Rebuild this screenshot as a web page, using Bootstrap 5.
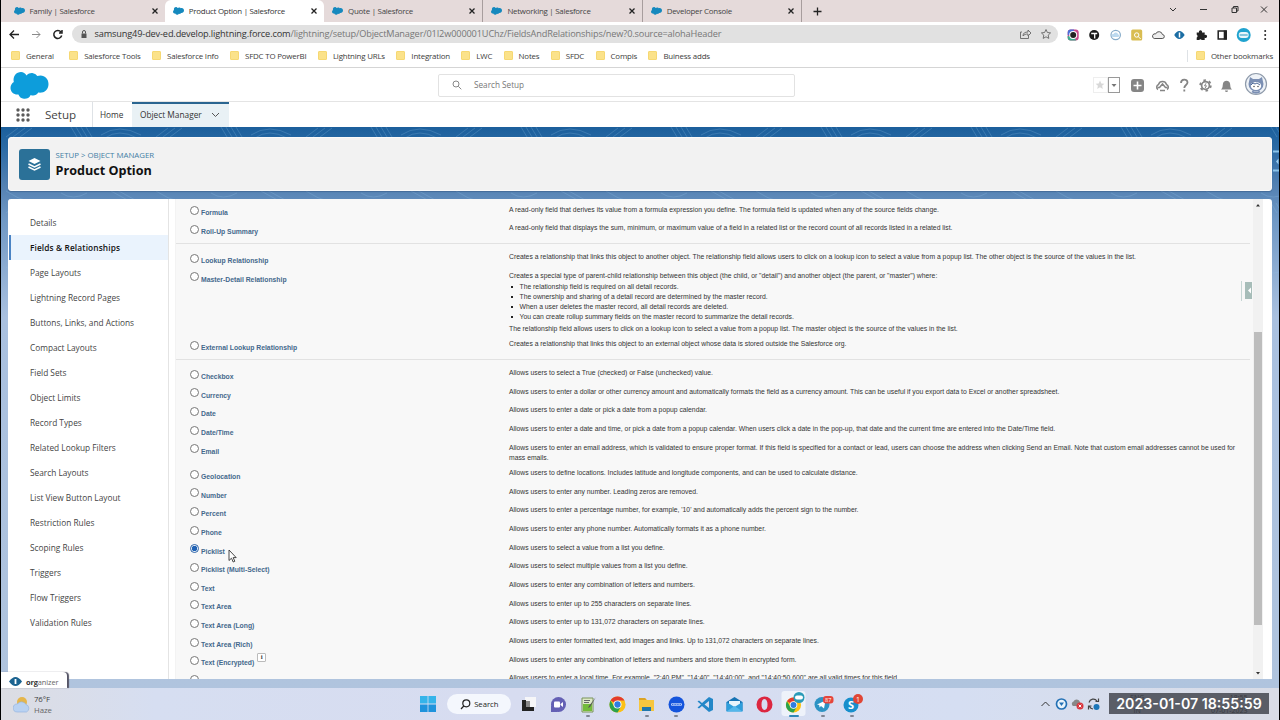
<!DOCTYPE html>
<html lang="en">
<head>
<meta charset="utf-8">
<title>Product Option | Salesforce</title>
<link href="https://cdn.jsdelivr.net/npm/bootstrap@5.3.0/dist/css/bootstrap.min.css" rel="stylesheet">
<style>
html,body{height:720px;overflow:hidden}
body{width:1280px;background:#fff;font-family:"Open Sans","Noto Sans",sans-serif;font-size:8.3px;line-height:12px;color:#3c3c3c;border-left:1px solid #000;border-right:1px solid #000;position:relative;white-space:nowrap}
svg{display:block;flex:none}
/* browser */
.tabstrip{height:22px;background:#e5dada;padding-left:4.5px}
.tab{width:159.3px;height:22px;padding:0 6px 0 8px;font-size:7.9px;letter-spacing:-.24px;color:#444}
.tab.on{background:#fff;border-radius:6px 6px 0 0;color:#333}
.tab.sep{border-right:1px solid #a79d9d}
.tab svg.fav{margin-right:5px}
.plus{margin:7px 0 0 11px}
.winbtns{margin-right:1.5px}
.toolbar{height:23px;padding-top:1px}
.url{width:987px;height:18px;border-radius:9px;background:#e1e1e1;font-size:9.2px;letter-spacing:-.146px;color:#777;padding:0 6px 0 8px;gap:6.5px}
.url b{font-weight:400;color:#333}
.marks{height:23px;padding:0 6px 1px 10px;border-bottom:1px solid #d5d5d5;gap:11.4px;font-size:7.9px;letter-spacing:-.18px}
.marks .bm{display:flex;align-items:center;gap:6px}
.folder{width:9px;height:9px;background:#fbe28a;border:1px solid #f6d873;border-radius:1px}
/* salesforce header */
.gh{height:34px;border-bottom:1px solid #e4e4e4;padding:1px 1px 0 9px}
.search{width:357px;height:23px;border:1px solid #e2e2e2;border-radius:2px;font-size:8.2px;color:#777;padding-left:13px;gap:12px;margin-left:389px}
.ctx{height:25px;padding-left:14px;color:#333}
.ctx .app{font-size:11.6px;color:#444;margin-left:14px;width:47px}
.otab{width:97px;height:25px;border-top:2px solid #2a6590;background:#e9f1f5;padding:0 9px 1px 8px}
.stage{height:561px;padding:10px 7px 0 7px;position:relative;background:linear-gradient(#1b5f9c 0,#2a6aa5 20px,#5683b4 62px,#6e97c4 90px,#a9c0df 190px,#b0c4de 100%)}
.topo{position:absolute;left:0;top:0}
.phead{height:54px;background:#f2f2f2;border:1px solid #fafafa;border-radius:3px;padding-left:10px;box-shadow:0 1px 1px rgba(30,60,100,.35);position:relative}
.obj{width:31px;height:31px;border-radius:3px;background:#2b7198;margin-right:5.5px}
.crumb{font-size:7.85px;color:#4380a5;line-height:11px}
.ttl{font-size:12.6px;font-weight:700;color:#111;line-height:15px;margin-top:2px}
.bodyc{height:480px;background:#fff;margin-top:8px;border-radius:3px 3px 0 0;overflow:hidden;position:relative;border-left:1px solid #fff}
.side{width:160px;padding-top:11px;border-right:1px solid #e4e4e4;color:#444}
.side div{height:25px;line-height:25px;padding-left:21px}
.side div.on{background:#eaf3fd;border-left:2px solid #4a83c4;padding-left:19px;font-weight:600;letter-spacing:.12px;color:#111}
.gut{width:7px;background:#fff;border-right:1px solid #f3f3f3}
.frame{width:1077px;background:#f8f8f8;padding-top:1.2px;font-family:"Liberation Sans",Arial,sans-serif;font-size:6.81px;line-height:10px;color:#333}
.r{height:18.667px;display:flex;padding-left:14px}
.r .lb{width:319px;display:flex;font-weight:700;color:#44688c;padding-top:8.3px;font-size:6.82px}
.r .ds{padding-top:4.4px}
.r.master{height:68.4px}
.r.tall{height:25.4px}
.rad{width:9px;height:9px;border:1px solid #777;border-radius:50%;background:#fff;margin:-2.2px 2px 0 0;flex:none}
.rad.on{border-color:#2a62a8;background:radial-gradient(circle,#1f62b5 2.4px,#fff 3.1px)}
.ln{height:10.2px;padding-top:5.2px}
.ln i{display:block;height:1px;background:#e2e2e2;width:1074px}
.ds ul{list-style:none;margin:1.3px 0 1.6px;padding-left:10.5px}
.ds li{position:relative}
.ds li:before{content:"";position:absolute;left:-9px;top:4px;width:2px;height:2px;background:#222}
.info{width:9px;height:9px;border:1px solid #bbb;border-radius:1px;margin:-5px 0 0 3px;font:700 7px/7px "Liberation Serif",serif;text-align:center;color:#444;background:#fff}
.sb{width:10px;background:#f1f1f1;position:relative}
.sb .th{width:8px;height:293px;background:#bdbdbd;margin:133px 1px 0}
.peek{position:absolute;left:1232px;top:81.5px;width:11px;height:20px;border-left:1px solid #c6d6d4;padding:1px 0 0 3px}
.edge{position:absolute;right:0;top:23px}
.org{position:absolute;left:0;top:672px;width:66px;height:16px;background:#fff;border-radius:0 4px 0 0;box-shadow:1.5px 0 1px #556;font-size:7.4px;letter-spacing:-.1px;color:#666;padding:3px 0 0 8px;gap:4px}
.org b{color:#333}
/* taskbar */
.task{height:32px;background:linear-gradient(90deg,#dcdde3,#d6def1 12%,#d7dcf0 40%,#d5def2 75%,#d9dce6);position:relative}
.wico{position:absolute;left:12px;top:8px}
.wtxt{position:absolute;left:33px;top:6px;line-height:10.5px;font-size:7.8px;letter-spacing:-.1px}
.wtxt span{color:#666}
.apps{position:absolute;left:412px;top:0;height:32px}
.cell{width:29.33px;height:32px;display:flex;justify-content:center;align-items:center;position:relative}
.cell.tv{width:26px;margin-right:2px}
.pill{width:64px;height:20px;border-radius:10px;background:#f4f7fd;font-size:7.7px;color:#222;gap:3px;margin:0 5px}
.dot:after{content:"";position:absolute;bottom:3px;width:4px;height:1.6px;border-radius:1px;background:#808694}
.dot.w:after{width:10px;background:#2f86b8}
.tray{position:absolute;left:1039px;top:0;height:32px}
.stamp{position:absolute;left:1108px;top:5px;width:160px;height:21px;background:rgba(62,65,73,.82);color:#fff;font:600 14.2px/22px Inter,sans-serif;text-align:center}
.under{position:absolute;font-size:7px;color:#111;top:3px;line-height:13px}
.cur{position:absolute;left:227px;top:549px}
</style>
</head>
<body>
<svg width="0" height="0" class="position-absolute">
<symbol id="cloud" viewBox="0 0 38 27"><path d="M16 3.500C18 1.300 20.500.8 22.500 1.200c2 .4 3.500 1.600 4.300 2.800C33 2 38 6 38 12c0 6-5 9.500-10.200 8.600-1.600 2.800-4.900 3.700-7.600 2.500-1.300 3-4 3.900-6.700 3.700-3-.3-4.700-2-5.600-4.300C3.500 23 0 20 0 16c0-2.600 1.400-4.700 3.300-5.900C2 4 6 0 10.500 0c2.300 0 4.300 1.300 5.500 3.500z"/></symbol>
<symbol id="x" viewBox="0 0 8 8"><path d="M1.500 1.500l5 5M6.500 1.500l-5 5" stroke="#222" stroke-width="1.300" fill="none"/></symbol>
<symbol id="chrome" viewBox="0 0 20 20"><circle cx="10" cy="10" r="9.500" fill="#fbc116"/><path d="M10 10L1.800 5.300A9.500 9.500 0 0 1 18.200 5.300H10z" fill="#e33b2e"/><path d="M1.800 5.300A9.500 9.500 0 0 0 10 19.500L14 12.500 6 12.300z" fill="#2ba24c"/><circle cx="10" cy="10" r="4.700" fill="#fff"/><circle cx="10" cy="10" r="3.700" fill="#2f7de1"/></symbol>
</svg>

<div class="tabstrip d-flex">
 <div class="tab d-flex align-items-center"><svg class="fav" width="11" height="8" fill="#1589be"><use href="#cloud"/></svg><span>Family | Salesforce</span><svg class="ms-auto" width="8" height="8"><use href="#x"/></svg></div>
 <div class="tab on d-flex align-items-center"><svg class="fav" width="11" height="8" fill="#1589be"><use href="#cloud"/></svg><span>Product Option | Salesforce</span><svg class="ms-auto" width="8" height="8"><use href="#x"/></svg></div>
 <div class="tab sep d-flex align-items-center"><svg class="fav" width="11" height="8" fill="#1589be"><use href="#cloud"/></svg><span>Quote | Salesforce</span><svg class="ms-auto" width="8" height="8"><use href="#x"/></svg></div>
 <div class="tab sep d-flex align-items-center"><svg class="fav" width="11" height="8" fill="#1589be"><use href="#cloud"/></svg><span>Networking | Salesforce</span><svg class="ms-auto" width="8" height="8"><use href="#x"/></svg></div>
 <div class="tab sep d-flex align-items-center"><svg class="fav" width="11" height="8" fill="#1589be"><use href="#cloud"/></svg><span>Developer Console</span><svg class="ms-auto" width="8" height="8"><use href="#x"/></svg></div>
 <svg class="plus" width="9" height="9" stroke="#222" stroke-width="1.300"><path d="M4.500 .5v8M.5 4.500h8"/></svg>
 <svg class="ms-auto winbtns" width="112" height="22" fill="none" stroke="#333"><path d="M4 8l3 3 3-3M34 9.500h7M66 8h4.500v4.500H66zM67.500 8V6.500H72V11h-1.500M95 6.500l6 6M101 6.500l-6 6"/></svg>
</div>
<div class="toolbar d-flex align-items-center">
 <svg width="71" height="23" fill="none" stroke="#222" stroke-width="1.300"><path d="M18 11.500H9.500M13 7.500l-4 4 4 4"/><path stroke="#8a8a8a" stroke-width="1" d="M31 11.500h8M35.500 8l3.500 3.500-3.500 3.500"/><path stroke-width="1.500" d="M60 9a4 4 0 1 0 .7 3.500M61 7v3h-3"/></svg>
 <div class="url d-flex align-items-center"><svg width="8" height="10"><path d="M1.500 4.500h5v4.500h-5z" fill="#555"/><path d="M2.500 4.500V3a1.500 1.500 0 0 1 3 0v1.500" fill="none" stroke="#555"/></svg><span><b>samsung49-dev-ed.develop.lightning.force.com</b>/lightning/setup/ObjectManager/01I2w000001UChz/FieldsAndRelationships/new?0.source=alohaHeader</span>
 <svg class="ms-auto" width="34" height="12" fill="none" stroke="#666" stroke-width=".9"><path d="M4 4H2.500v6.500h8V8M5 8c0-3 2-4 5-4V2l3 3-3 3V6C8 6 6 6.500 5 8z"/><path d="M28 1.500l1.400 3 3.200.4-2.400 2.200.6 3.300L28 8.800l-2.800 1.600.6-3.300-2.400-2.200 3.200-.4z"/></svg></div>
 <svg width="221" height="23">
  <g transform="translate(.7 -.5)">
  <g transform="translate(14.500 12.500)"><rect x="-5.500" y="-5.500" width="11" height="11" rx="3" fill="#c94a8c"/><path d="M-5.500 0v-2.500a3 3 0 0 1 3-3H1L-1 0z" fill="#4d6fd8"/><path d="M-5.500 1v1.500a3 3 0 0 0 3 3H3L0 1z" fill="#3fae8e"/><circle r="4" fill="#fff"/><circle r="3" fill="#222"/></g>
  <g transform="translate(35.500 12.500)"><circle r="5" fill="#1b1b1b"/><path d="M-3-1.500h6M.5-1.500v5" stroke="#fff" stroke-width="1.300"/></g>
  <g transform="translate(57 12.500)"><circle r="4.700" fill="#fff" stroke="#86abc9" stroke-width="1.200"/><path d="M-2.800 2a1.500 1.500 0 0 1 .5-3 2.500 2.500 0 0 1 4.700.3A1.400 1.400 0 0 1 2.500 2z" fill="#bcd9ef"/></g>
  <g transform="translate(78 12.500)"><rect x="-5.500" y="-5.500" width="11" height="11" rx="1.500" fill="#d9bd52"/><circle r="2.200" fill="none" stroke="#fff"/><path d="M1.500 1.500l2.500 2.500" stroke="#fff"/></g>
  <path d="M95.500 16h8a2 2 0 0 0 .2-4 3.500 3.500 0 0 0-6.700-.6 2.400 2.400 0 0 0-1.500 4.600z" fill="#eee" stroke="#555"/>
  <path d="M115.500 12.500q5-8 10.500 0-5.500 8-10.500 0z" fill="#1c6ea4"/><circle cx="120.800" cy="12.500" r="3.500" fill="#1c6ea4"/><path d="M120.800 10v5" stroke="#fff" stroke-width="1.500"/>
  <path d="M138 10h2.300a1.600 1.600 0 1 1 3 0h2.700v2.500a1.600 1.600 0 1 1 0 2.800V17.500h-3a1.500 1.500 0 0 0-2.500 0H138v-2.500a1.500 1.500 0 0 0 0-2.700z" fill="#222"/>
  <path d="M159.500 8.500h8v8h-8z" fill="none" stroke="#222" stroke-width="1.500"/><path d="M165 8h3v9h-3z" fill="#222"/>
  <circle cx="185" cy="12.500" r="7" fill="#20a3cf"/><rect x="180" y="9.500" width="10" height="6" rx="3" fill="#e9f6fb"/><path d="M181 12.500h8" stroke="#2898c0"/>
  <g fill="#222"><circle cx="206.500" cy="8.500" r="1"/><circle cx="206.500" cy="12.500" r="1"/><circle cx="206.500" cy="16.500" r="1"/></g>
  </g>
 </svg>
</div>
<div class="marks d-flex align-items-center">
 <div class="bm me-1"><i class="folder"></i><span>General</span></div>
 <div class="bm"><i class="folder"></i><span>Salesforce Tools</span></div>
 <div class="bm"><i class="folder"></i><span>Salesforce Info</span></div>
 <div class="bm"><i class="folder"></i><span>SFDC TO PowerBI</span></div>
 <div class="bm"><i class="folder"></i><span>Lightning URLs</span></div>
 <div class="bm"><i class="folder"></i><span>Integration</span></div>
 <div class="bm"><i class="folder"></i><span>LWC</span></div>
 <div class="bm"><i class="folder"></i><span>Notes</span></div>
 <div class="bm"><i class="folder"></i><span>SFDC</span></div>
 <div class="bm"><i class="folder"></i><span>Compis</span></div>
 <div class="bm"><i class="folder"></i><span>Buiness adds</span></div>
 <div class="bm ms-auto border-start ps-2"><i class="folder"></i><span>Other bookmarks</span></div>
</div>

<div class="gh d-flex align-items-center">
 <svg width="39" height="27" fill="#0d9ddb"><use href="#cloud"/></svg>
 <div class="search d-flex align-items-center"><svg width="10" height="10" fill="none" stroke="#888"><circle cx="4" cy="4" r="3"/><path d="M6.300 6.300L9.300 9.300"/></svg><span>Search Setup</span></div>
 <svg class="ms-auto" width="188" height="32" viewBox="0 0 188 32">
  <rect x="3.500" y="8.500" width="14" height="15" fill="#fff" stroke="#eee"/><path d="M10 11.500l1.300 2.900 3.100.3-2.300 2.100.7 3.100L10 18.300l-2.800 1.600.7-3.100-2.300-2.100 3.100-.3z" fill="#d8d8d8"/>
  <rect x="18.500" y="8.500" width="11" height="15" fill="#fff" stroke="#999"/><path d="M21.500 15h5l-2.500 3z" fill="#777"/>
  <rect x="41" y="10" width="13" height="13" rx="3" fill="#858585"/><path d="M47.500 12.500v8M43.500 16.500h8" stroke="#fff" stroke-width="1.600"/>
  <g transform="translate(72.500 16.500)" fill="none" stroke="#858585" stroke-width="1.500"><path d="M-4.500 4A2.800 2.800 0 0 1-4-1 4.200 4.200 0 0 1 4-1 2.800 2.800 0 0 1 4.500 4"/><path d="M-3 2l3-3.500L3 2M-2.500 5h5M-5 2h2.500M2.500 2H5"/></g>
  <path d="M91 14c0-4.500 6.500-4.500 6.500-.5 0 2.500-3.200 2.500-3.200 5.500M94.300 20.500v2" fill="none" stroke="#858585" stroke-width="1.800"/>
  <g transform="translate(115.500 16.500)" fill="none" stroke="#858585"><circle r="3.900" stroke-width="1.700"/><circle r="5.300" stroke-width="1.800" stroke-dasharray="2.500 3.050"/><path d="M.6-2.300L-1 .3H1L-.4 2.500" stroke-width="1"/></g>
  <path d="M131 20.500c2-1.500 1.500-4 2-6a3.600 3.600 0 0 1 7 0c.5 2 0 4.500 2 6zM135 21.500h3a1.500 1.500 0 0 1-3 0z" fill="#858585"/>
  <g transform="translate(166 15)"><circle r="10.500" fill="#eef2f7" stroke="#8f9bab" stroke-width="1.200"/><path d="M-6-7l3 2h6l3-2 1.500 7a7.500 7.500 0 0 1-15 0z" fill="#7b8fb3"/><ellipse cy="2" rx="5.200" ry="4" fill="#fff"/><path d="M-5 1l2-2 2 1 2-1 3 2" stroke="#506b98" fill="none"/><circle cx="-2" cy="2.500" r=".7" fill="#333"/><circle cx="2" cy="2.500" r=".7" fill="#333"/><path d="M-4 7.500q4 2.500 8 0" stroke="#7b8fb3" stroke-width="2" fill="none"/></g>
 </svg>
</div>
<div class="ctx d-flex align-items-center">
 <svg width="16" height="16" fill="#5a5a5a"><g id="d"><circle cx="3" cy="3" r="1.700"/><circle cx="8" cy="3" r="1.700"/><circle cx="13" cy="3" r="1.700"/></g><use href="#d" y="5"/><use href="#d" y="10"/></svg>
 <span class="app">Setup</span>
 <span class="border-start h-100 d-flex align-items-center" style="width:40px;padding-left:7px">Home</span>
 <div class="otab d-flex align-items-center justify-content-between"><span>Object Manager</span><svg width="9" height="6" fill="none" stroke="#555"><path d="M1 1l3.500 3.500L8 1"/></svg></div>
</div>

<div class="stage">
 <svg class="topo" width="1278" height="150"><defs><pattern id="tp" width="150" height="76" patternUnits="userSpaceOnUse"><g fill="none" stroke="#8fc0e6" stroke-opacity=".35" stroke-width=".7"><path d="M5 10l12-9M12 10l12-9M19 10l12-9M70 0l6 10M75 0l6 10M80 0l6 10M85 0l6 10M100 8q18-12 40 0M104 11q14-10 32 0M5 64q12 8 22 10M60 66q12 8 26 0M110 64l20 11M116 63l20 11"/></g></pattern></defs><rect width="1278" height="150" fill="url(#tp)"/></svg>
 <svg class="edge" width="6" height="22"><path d="M0 1.500h6M0 20.500h6" stroke="#8cc4ea" stroke-width="2"/><path d="M5.500 8.500v6L3 11.500z" fill="#9ccdf0"/></svg>
 <div class="phead d-flex align-items-center">
  <div class="obj d-flex align-items-center justify-content-center"><svg width="15" height="15"><path d="M7.500 1l6 3-6 3-6-3z" fill="#fff"/><path d="M1.500 7l6 3 6-3M1.500 10l6 3 6-3" fill="none" stroke="#fff" stroke-width="1.500"/></svg></div>
  <div><div class="crumb">SETUP &gt; OBJECT MANAGER</div><div class="ttl">Product Option</div></div>
 </div>
 <div class="bodyc d-flex">
  <div class="side">
   <div>Details</div><div class="on">Fields &amp; Relationships</div><div>Page Layouts</div><div>Lightning Record Pages</div><div>Buttons, Links, and Actions</div><div>Compact Layouts</div><div>Field Sets</div><div>Object Limits</div><div>Record Types</div><div>Related Lookup Filters</div><div>Search Layouts</div><div>List View Button Layout</div><div>Restriction Rules</div><div>Scoping Rules</div><div>Triggers</div><div>Flow Triggers</div><div>Validation Rules</div>
  </div>
  <div class="gut"></div>
  <div class="frame">
   <div class="r"><div class="lb"><i class="rad"></i>Formula</div><div class="ds">A read-only field that derives its value from a formula expression you define. The formula field is updated when any of the source fields change.</div></div>
   <div class="r"><div class="lb"><i class="rad"></i>Roll-Up Summary</div><div class="ds">A read-only field that displays the sum, minimum, or maximum value of a field in a related list or the record count of all records listed in a related list.</div></div>
   <div class="ln"><i></i></div>
   <div class="r"><div class="lb"><i class="rad"></i>Lookup Relationship</div><div class="ds">Creates a relationship that links this object to another object. The relationship field allows users to click on a lookup icon to select a value from a popup list. The other object is the source of the values in the list.</div></div>
   <div class="r master"><div class="lb"><i class="rad"></i>Master-Detail Relationship</div><div class="ds">Creates a special type of parent-child relationship between this object (the child, or "detail") and another object (the parent, or "master") where:<ul><li>The relationship field is required on all detail records.</li><li>The ownership and sharing of a detail record are determined by the master record.</li><li>When a user deletes the master record, all detail records are deleted.</li><li>You can create rollup summary fields on the master record to summarize the detail records.</li></ul>The relationship field allows users to click on a lookup icon to select a value from a popup list. The master object is the source of the values in the list.</div></div>
   <div class="r"><div class="lb"><i class="rad"></i>External Lookup Relationship</div><div class="ds">Creates a relationship that links this object to an external object whose data is stored outside the Salesforce org.</div></div>
   <div class="ln"><i></i></div>
   <div class="r"><div class="lb"><i class="rad"></i>Checkbox</div><div class="ds">Allows users to select a True (checked) or False (unchecked) value.</div></div>
   <div class="r"><div class="lb"><i class="rad"></i>Currency</div><div class="ds">Allows users to enter a dollar or other currency amount and automatically formats the field as a currency amount. This can be useful if you export data to Excel or another spreadsheet.</div></div>
   <div class="r"><div class="lb"><i class="rad"></i>Date</div><div class="ds">Allows users to enter a date or pick a date from a popup calendar.</div></div>
   <div class="r"><div class="lb"><i class="rad"></i>Date/Time</div><div class="ds">Allows users to enter a date and time, or pick a date from a popup calendar. When users click a date in the pop-up, that date and the current time are entered into the Date/Time field.</div></div>
   <div class="r tall"><div class="lb"><i class="rad"></i>Email</div><div class="ds">Allows users to enter an email address, which is validated to ensure proper format. If this field is specified for a contact or lead, users can choose the address when clicking Send an Email. Note that custom email addresses cannot be used for<br>mass emails.</div></div>
   <div class="r"><div class="lb"><i class="rad"></i>Geolocation</div><div class="ds">Allows users to define locations. Includes latitude and longitude components, and can be used to calculate distance.</div></div>
   <div class="r"><div class="lb"><i class="rad"></i>Number</div><div class="ds">Allows users to enter any number. Leading zeros are removed.</div></div>
   <div class="r"><div class="lb"><i class="rad"></i>Percent</div><div class="ds">Allows users to enter a percentage number, for example, '10' and automatically adds the percent sign to the number.</div></div>
   <div class="r"><div class="lb"><i class="rad"></i>Phone</div><div class="ds">Allows users to enter any phone number. Automatically formats it as a phone number.</div></div>
   <div class="r"><div class="lb"><i class="rad on"></i>Picklist</div><div class="ds">Allows users to select a value from a list you define.</div></div>
   <div class="r"><div class="lb"><i class="rad"></i>Picklist (Multi-Select)</div><div class="ds">Allows users to select multiple values from a list you define.</div></div>
   <div class="r"><div class="lb"><i class="rad"></i>Text</div><div class="ds">Allows users to enter any combination of letters and numbers.</div></div>
   <div class="r"><div class="lb"><i class="rad"></i>Text Area</div><div class="ds">Allows users to enter up to 255 characters on separate lines.</div></div>
   <div class="r"><div class="lb"><i class="rad"></i>Text Area (Long)</div><div class="ds">Allows users to enter up to 131,072 characters on separate lines.</div></div>
   <div class="r"><div class="lb"><i class="rad"></i>Text Area (Rich)</div><div class="ds">Allows users to enter formatted text, add images and links. Up to 131,072 characters on separate lines.</div></div>
   <div class="r"><div class="lb"><i class="rad"></i>Text (Encrypted)<span class="info">i</span></div><div class="ds">Allows users to enter any combination of letters and numbers and store them in encrypted form.</div></div>
   <div class="r"><div class="lb"><i class="rad"></i></div><div class="ds">Allows users to enter a local time. For example, "2:40 PM", "14:40", "14:40:00", and "14:40:50.600" are all valid times for this field.</div></div>
  </div>
  <div class="sb"><svg class="position-absolute" width="10" height="480"><path d="M3 7.500L5 5l2 2.500zM3 473l2 2.500 2-2.500z" fill="#333"/></svg><div class="th"></div></div>
  <div class="peek"><svg width="7" height="17"><path d="M0 0h7v17H0z" fill="#a7bdb9"/><path d="M6 5.500v6L3 8.500z" fill="#fff"/></svg></div>
 </div>
</div>
<div class="task">
 <svg class="wico" width="20" height="18"><circle cx="9" cy="6" r="5" fill="#e5b64c"/><path d="M4 16a4 4 0 0 1 .5-8 5 5 0 0 1 8.500.5A4 4 0 0 1 13.500 16z" fill="#b9d2f2" stroke="#8fb0dd" stroke-width=".6"/></svg>
 <div class="wtxt">76°F<br><span>Haze</span></div>
 <div class="apps d-flex align-items-center">
  <div class="cell"><svg width="16" height="16" fill="#1f93dc"><path d="M0 0h7.600v7.600H0zM8.400 0H16v7.600H8.400z" fill="#35b4ea"/><path d="M0 8.400h7.600V16H0zM8.400 8.400H16V16H8.400z"/></svg></div>
  <div class="pill d-flex align-items-center justify-content-center"><svg width="11" height="11" fill="none" stroke="#222" stroke-width="1.200"><circle cx="6.300" cy="4.300" r="3.500"/><path d="M3.800 7L1 10"/></svg><span>Search</span></div>
  <div class="cell tv"><svg width="16" height="16"><path d="M4 1h11v10H4z" fill="#f6f6f8"/><path d="M1 4h4v7h8v4H1z" fill="#222"/><path d="M5 5h4v6H5z" fill="#888"/></svg></div>
  <div class="cell"><svg width="17" height="17"><circle cx="8.500" cy="8.500" r="7.500" fill="#6460b4"/><path d="M1 9v7h7z" fill="#6460b4"/><rect x="4" y="5.500" width="6" height="6" rx="1" fill="#fff"/><path d="M10.500 8l2.500-2v5l-2.500-2z" fill="#fff"/></svg></div>
  <div class="cell dot"><svg width="17" height="17"><path d="M2 2h11v14H2z" fill="#dfe9c8" stroke="#79945a"/><path d="M3 8h9v7H3z" fill="#74bb3a"/><path d="M4 4.500h6M4 6.500h5" stroke="#666"/><path d="M16 1L9 10l-1 2 2-1z" fill="#555"/></svg></div>
  <div class="cell"><svg width="17" height="17"><use href="#chrome"/></svg></div>
  <div class="cell dot"><svg width="17" height="17"><path d="M1 2h6l2 2h7v11H1z" fill="#f6c63f"/><path d="M1 2h6l1.500 2H1z" fill="#dca325"/><path d="M4 11h9v4H4z" fill="#1f77ae"/></svg></div>
  <div class="cell dot"><svg width="17" height="17"><circle cx="8.500" cy="8.500" r="8" fill="#1454dc"/><rect x="3" y="7.200" width="11" height="2.600" rx="1" fill="#b8cdf8"/><path d="M4 8.500h9" stroke="#1454dc" stroke-width=".8" stroke-dasharray="1 .6"/></svg></div>
  <div class="cell"><svg width="17" height="17"><path d="M12 1l4 2v11l-4 2-7-6-3 2.500-1.500-1L4 8.500.500 5.500 2 4.500 5 7zM12 5L7.500 8.500 12 12z" fill="#2387c8" fill-rule="evenodd"/></svg></div>
  <div class="cell"><svg width="17" height="17"><path d="M.5 6L8.500 1l8 5v9h-16z" fill="#1673b4"/><path d="M3 5h11v6H3z" fill="#e8f4fb"/><path d="M.5 6l8 5 8-5v9.500H.500z" fill="#2f9edb"/><path d="M.5 15.500L8.500 10l8 5.500z" fill="#54b7ea"/></svg></div>
  <div class="cell"><svg width="17" height="17"><path fill-rule="evenodd" d="M8.500 .5a8 8 0 1 1 0 16 8 8 0 0 1 0-16zM8.500 3C6.500 3 5.500 5.500 5.500 8.500s1 5.500 3 5.500 3-2.500 3-5.500-1-5.500-3-5.500z" fill="#dc2740"/></svg></div>
  <div class="cell dot w"><svg width="26" height="26"><rect x=".5" width="24" height="25" rx="3" fill="#eef2fa"/><svg x="4" y="6" width="17" height="16"><use href="#chrome"/></svg><circle cx="18" cy="6.500" r="5.500" fill="#2a9bb8"/><rect x="14" y="4.500" width="8" height="4" rx="2" fill="#fff"/></svg></div>
  <div class="cell dot"><svg width="22" height="20"><circle cx="10" cy="10.500" r="7.500" fill="#2d93c4"/><path d="M5 10.500l8.500-4-1.500 8-3-2.500-1.500 1.500-.300-2.500z" fill="#fff"/><rect x="11" y="2" width="10.500" height="7.500" rx="3" fill="#e5453c"/><text x="16.200" y="8" font-size="5.500" text-anchor="middle" fill="#fff">87</text></svg></div>
  <div class="cell dot"><svg width="22" height="22"><circle cx="10" cy="12" r="7.500" fill="#188fcc"/><text x="10" y="16" font-size="11" font-weight="700" text-anchor="middle" fill="#fff">S</text><circle cx="17" cy="6" r="5" fill="#e04636"/><text x="17" y="8.500" font-size="7" text-anchor="middle" fill="#fff">1</text></svg></div>
 </div>
 <svg class="tray" width="68" height="32"><path d="M1.500 18l4-4 4 4" fill="none" stroke="#333"/><circle cx="21.500" cy="16" r="5" fill="#eaf4fb" stroke="#2471b5" stroke-width="1.700"/><path d="M19 14.500h5L21.500 18z" fill="#2471b5"/><path d="M33 18a2.500 2.500 0 0 1 .5-4.500 3.500 3.500 0 0 1 6.500.5v4z" fill="#888"/><circle cx="40" cy="18" r="3.500" fill="#d9363e"/><path d="M38.700 16.700l2.600 2.600M41.300 16.700l-2.600 2.600" stroke="#fff"/><path d="M49 14.500a4.500 4.500 0 0 1 8-1.500M58.500 10.500V13.500h-3M49.500 18.500a4.500 4.500 0 0 0 3.500 2.500M48.500 21.500v-3.500h3" fill="none" stroke="#444" stroke-width="1.200"/><circle cx="56.500" cy="19" r="3" fill="#1b76b8"/></svg>
 <div class="under text-center" style="left:1129px">ENG<br>IN</div>
 <div class="under text-end" style="left:1210px">18:55<br>07-01-2023</div>
 <div class="stamp">2023-01-07 18:55:59</div>
</div>
<div class="org d-flex align-items-center"><svg width="13" height="9"><path d="M0 4.500q6.500-9 13 0-6.500 9-13 0z" fill="#1b6390"/><path d="M6.500 2v5" stroke="#fff" stroke-width="1.800"/></svg><span><b>org</b>anizer</span></div>
<svg class="cur" width="9" height="14"><path d="M1 1v10.500l2.500-2.300 1.700 3.800 1.600-.7L5.200 8.600h3z" fill="#fff" stroke="#333" stroke-width=".9"/></svg>
<script src="https://cdn.jsdelivr.net/npm/bootstrap@5.3.0/dist/js/bootstrap.bundle.min.js"></script>
</body>
</html>
